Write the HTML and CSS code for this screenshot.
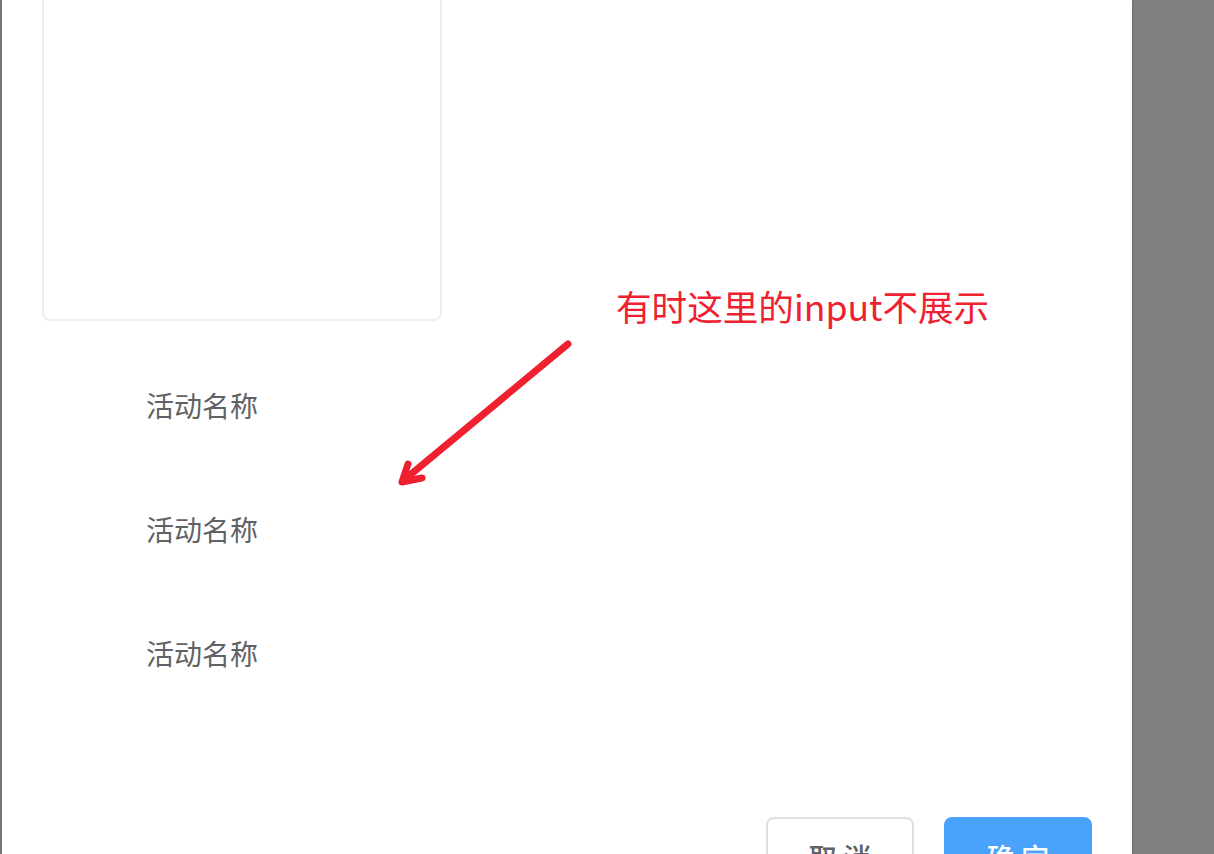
FILE: index.html
```html
<!DOCTYPE html>
<html lang="zh-CN">
<head>
<meta charset="utf-8">
<title>Dialog</title>
<link rel="stylesheet" href="styles.css">
</head>
<body>
<div class="dialog">
  <div class="dialog-body">
    <div class="preview"></div>
    <form class="form">
      <div class="form-item"><label class="form-label">活动名称</label><div class="form-content"></div></div>
      <div class="form-item"><label class="form-label">活动名称</label><div class="form-content"></div></div>
      <div class="form-item"><label class="form-label">活动名称</label><div class="form-content"></div></div>
    </form>
  </div>
  <div class="dialog-footer">
    <button class="btn btn-default" type="button">取 消</button>
    <button class="btn btn-primary" type="button">确 定</button>
  </div>
</div>
<div class="note">有时这里的input不展示</div>
<svg class="arrow" width="1214" height="854" viewBox="0 0 1214 854" xmlns="http://www.w3.org/2000/svg">
  <g fill="none" stroke="#ef2130" stroke-width="7" stroke-linecap="round" stroke-linejoin="round">
    <line x1="568" y1="344" x2="404" y2="480"/>
    <polyline points="408,464 402,482 422,478"/>
  </g>
</svg>
</body>
</html>
```

FILE: styles.css
```css
html, body {
  margin: 0;
  padding: 0;
}
body {
  width: 1214px;
  height: 854px;
  overflow: hidden;
  background: #808080;
  font-family: "Noto Sans CJK SC", "Noto Sans", sans-serif;
  position: relative;
}
.dialog {
  margin-left: 2px;
  width: 1130px;
  height: 854px;
  background: #ffffff;
  overflow: hidden;
  box-shadow: 0 1px 3px rgba(0, 0, 0, 0.3);
}
.dialog-body {
  padding: 0 40px 60px;
}
.preview {
  box-sizing: border-box;
  width: 400px;
  height: 400px;
  margin-top: -79px;
  border: 2px solid #ebeef5;
  border-radius: 8px;
}
.form {
  margin: 44px 0 0;
}
.form-item {
  display: flex;
  height: 80px;
  margin-bottom: 44px;
}
.form-label {
  box-sizing: border-box;
  width: 240px;
  padding-right: 24px;
  text-align: right;
  font-size: 28px;
  line-height: 80px;
  color: #606266;
}
.form-content {
  flex: 1;
}
.dialog-footer {
  padding: 20px 40px;
  display: flex;
  justify-content: flex-end;
  gap: 30px;
}
.btn {
  box-sizing: border-box;
  width: 148px;
  height: 80px;
  padding: 0;
  border-radius: 8px;
  font-family: "Noto Sans CJK SC", "Noto Sans", sans-serif;
  font-size: 28px;
  font-weight: 500;
  line-height: 1;
  text-align: center;
  cursor: pointer;
}
.btn-default {
  background: #ffffff;
  border: 2px solid #dcdfe6;
  color: #606266;
}
.btn-primary {
  background: #49a2fb;
  border: 2px solid #49a2fb;
  color: #ffffff;
}
.note {
  position: absolute;
  left: 616px;
  top: 288px;
  font-size: 35.6px;
  line-height: 1;
  color: #ef2130;
  white-space: nowrap;
}
.arrow {
  position: absolute;
  left: 0;
  top: 0;
}
```
